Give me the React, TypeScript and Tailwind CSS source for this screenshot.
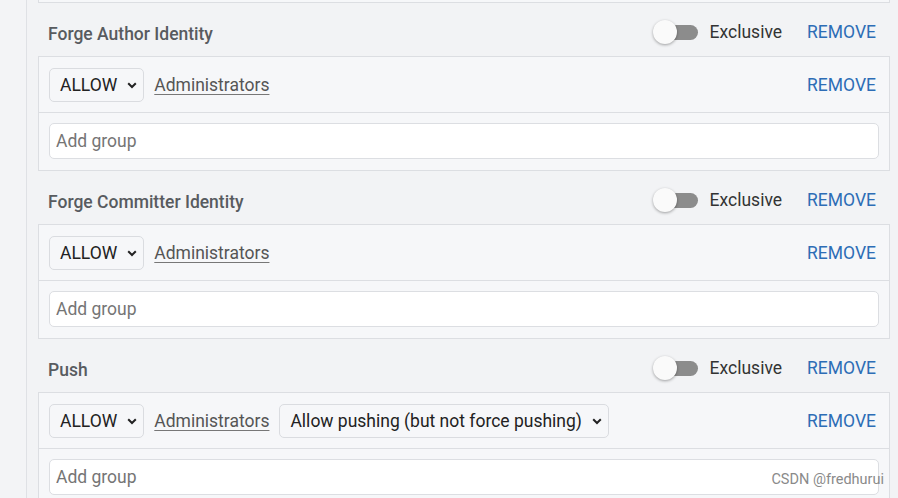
type Rule = {
  title: string;
  extra?: string;
};

const rules: Rule[] = [
  { title: 'Forge Author Identity' },
  { title: 'Forge Committer Identity' },
  { title: 'Push', extra: 'Allow pushing (but not force pushing)' },
];

function Toggle() {
  return (
    <div className="relative w-[46px] h-[26px] flex items-center">
      <div className="absolute left-[7px] w-[38px] h-[15px] rounded-full bg-[#8c8c8c]" />
      <div className="absolute left-0 top-[1px] w-[24px] h-[24px] rounded-full bg-[#fafafa] shadow-[0_1px_3px_rgba(0,0,0,0.35)]" />
    </div>
  );
}

function FakeSelect({ label }: { label: string }) {
  return (
    <div className="h-[34px] flex items-center pl-[10px] pr-[6px] border border-[#dadce0] rounded-[5px] bg-[#f6f7f9] text-[17.5px] text-[#222]">
      <span>{label}</span>
      <svg width="10" height="7" viewBox="0 0 10 7" className="ml-[10px]">
        <polyline points="1.2,1.2 5,5 8.8,1.2" fill="none" stroke="#222" strokeWidth="2" />
      </svg>
    </div>
  );
}

function RuleSection({ rule }: { rule: Rule }) {
  return (
    <div>
      <div className="h-[53px] flex items-center pl-[10px] pr-[14px] pt-[5px]">
        <span className="mt-[4px] text-[17.5px] font-medium text-[#585b5f]">{rule.title}</span>
        <div className="ml-auto flex items-center">
          <Toggle />
          <span className="ml-[11px] text-[17.5px] text-[#333]">Exclusive</span>
          <span className="ml-[25px] text-[17.5px] text-[#2d6db6]">REMOVE</span>
        </div>
      </div>
      <div className="border border-[#dcdee2]">
        <div className="h-[56px] flex items-center gap-[10px] px-[10px] pr-[13px] pt-[1px] bg-[#f6f7f9] border-b border-[#dcdee2]">
          <FakeSelect label="ALLOW" />
          <span className="text-[17.5px] text-[#555] underline underline-offset-[3px] decoration-[#777]">
            Administrators
          </span>
          {rule.extra && <FakeSelect label={rule.extra} />}
          <span className="ml-auto text-[17.5px] text-[#2d6db6]">REMOVE</span>
        </div>
        <div className="h-[57px] px-[10px] pt-[10px] bg-[#f6f7f9]">
          <input
            placeholder="Add group"
            className="w-full h-[36px] px-[6px] bg-white border border-[#dcdee2] rounded-[5px] text-[17.5px] placeholder-[#757575] outline-none"
          />
        </div>
      </div>
    </div>
  );
}

export default function App() {
  return (
    <div
      className="relative w-[898px] h-[498px] overflow-hidden flex bg-[#f2f3f5]"
      style={{ fontFamily: 'Roboto, "Liberation Sans", sans-serif' }}
    >
      <div className="w-[27px] shrink-0 bg-[#f3f4f6] border-r border-[#dfe1e5]" />
      <div className="w-[852px] shrink-0 ml-[11px]">
        <div className="h-[3px] border-x border-b border-[#dcdee2] bg-[#f6f7f9]" />
        {rules.map((r) => (
          <RuleSection key={r.title} rule={r} />
        ))}
      </div>
      <span className="absolute right-[14px] bottom-[7px] text-[14.5px] text-[#8a8a8a]">
        CSDN @fredhurui
      </span>
    </div>
  );
}
